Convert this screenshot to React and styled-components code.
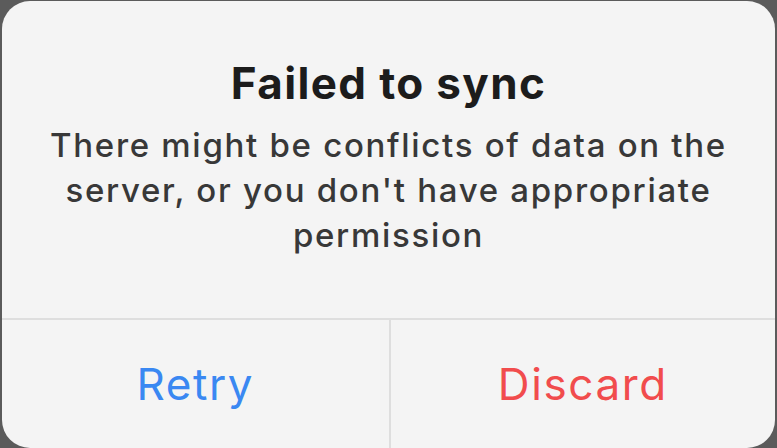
import styled, { createGlobalStyle } from "styled-components";

const GlobalStyle = createGlobalStyle`
  html, body {
    margin: 0;
    padding: 0;
    background: #5b5b5b;
  }
  body {
    font-family: Inter, "Liberation Sans", Arial, sans-serif;
    -webkit-font-smoothing: antialiased;
  }
`;

const Page = styled.div`
  padding: 1px 2px 0;
`;

// iOS style alert, filling the window
const Alert = styled.div`
  height: 447px;
  display: flex;
  flex-direction: column;
  background: #f4f4f4;
  border-radius: 28px;
  overflow: hidden;
`;

const Content = styled.div`
  flex: 1;
  padding: 56px 24px 0;
  text-align: center;
`;

const Title = styled.h2`
  margin: 0;
  font-size: 44px;
  line-height: 52px;
  font-weight: 700;
  letter-spacing: 1.35px;
  color: #1c1c1c;
`;

const Message = styled.p`
  margin: 14px 0 0;
  font-size: 33px;
  line-height: 45px;
  font-weight: 500;
  letter-spacing: 1.7px;
  color: #383838;
`;

const Actions = styled.div`
  height: 128px;
  display: grid;
  grid-template-columns: 1fr 1fr;
  border-top: 2px solid #dedede;
`;

const ActionButton = styled.button`
  border: 0;
  border-left: ${(p) => (p.$divider ? "2px solid #dedede" : "0")};
  background: transparent;
  font-family: inherit;
  font-size: 44px;
  font-weight: 400;
  letter-spacing: 1.6px;
  color: ${(p) => p.$color};
  cursor: pointer;
  padding: 0;
`;

export default function App() {
  return (
    <Page>
      <GlobalStyle />
      <Alert>
        <Content>
          <Title>Failed to sync</Title>
          <Message>
            There might be conflicts of data on the server, or you don't have
            appropriate permission
          </Message>
        </Content>
        <Actions>
          <ActionButton $color="#3a88f2">Retry</ActionButton>
          <ActionButton $color="#f14c4d" $divider>
            Discard
          </ActionButton>
        </Actions>
      </Alert>
    </Page>
  );
}
